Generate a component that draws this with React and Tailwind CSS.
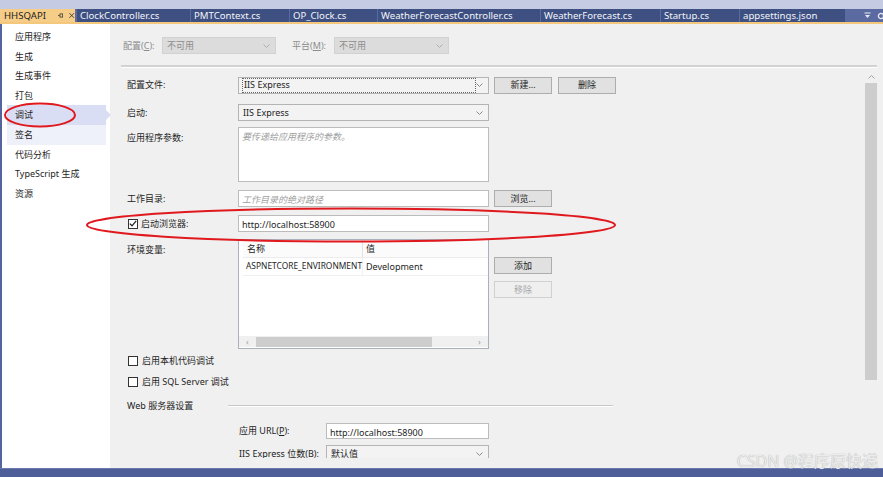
import React from 'react';

const font = "font-['Noto_Sans','Noto_Sans_CJK_SC',sans-serif]";

const tabs = [
  ['ClockController.cs', 'w-[113px]'],
  ['PMTContext.cs', 'w-[98px]'],
  ['OP_Clock.cs', 'w-[87px]'],
  ['WeatherForecastController.cs', 'w-[162px]'],
  ['WeatherForecast.cs', 'w-[119px]'],
  ['Startup.cs', 'w-[78px]'],
  ['appsettings.json', 'w-[105px]'],
];

const menu = ['应用程序', '生成', '生成事件', '打包', '调试', '签名', '代码分析', 'TypeScript 生成', '资源'];

const Chevron = ({ color = '#7a7a7a' }) => (
  <svg width="7" height="4" viewBox="0 0 7 4" fill="none">
    <path d="M0.5 0.5 L3.5 3.5 L6.5 0.5" stroke={color} strokeWidth="1" />
  </svg>
);

const Select = ({ value, className = 'w-[251px]', disabled, dotted }) => (
  <div
    className={`${className} h-[17px] shrink-0 flex items-center justify-between pl-[3px] pr-[5px] border ${
      disabled ? 'bg-[#dcdcdc] border-[#d2d2d2] text-[#8c8c8c]' : 'bg-[#f3f3f3] border-[#b4b4b4] text-[#1e1e1e]'
    }`}
  >
    <div className={`flex-1 h-full flex items-center pl-[1px] ${dotted ? 'border border-dotted border-[#666]' : ''}`}>
      {value}
    </div>
    <Chevron color={disabled ? '#b0b0b0' : '#8a8a8a'} />
  </div>
);

const Input = ({ value, placeholder, className = 'w-[251px] h-[17px]' }) => (
  <div className={`${className} shrink-0 bg-white border border-[#bcbcbc] pl-[3px] flex items-start pt-[2px]`}>
    {value ? (
      <span className="text-[#1e1e1e]">{value}</span>
    ) : (
      <span className="italic text-[#a0a0a0]">{placeholder}</span>
    )}
  </div>
);

const Button = ({ children, disabled }) => (
  <button
    className={`w-[58px] h-[17px] shrink-0 border flex items-center justify-center ${
      disabled ? 'bg-[#efefef] border-[#d0d0d0] text-[#a8a8a8]' : 'bg-[#e1e1e1] border-[#adadad] text-[#1e1e1e]'
    }`}
  >
    {children}
  </button>
);

const Check = ({ checked }) => (
  <div className="w-[10px] h-[10px] shrink-0 border border-[#333] bg-white flex items-center justify-center">
    {checked && (
      <svg width="8" height="7" viewBox="0 0 8 7" fill="none">
        <path d="M0.8 3.6 L3 5.8 L7.2 0.8" stroke="#222" strokeWidth="1.3" />
      </svg>
    )}
  </div>
);

export default function App() {
  return (
    <div className={`${font} relative w-[883px] h-[477px] overflow-hidden bg-[#c6cbe4] flex flex-col text-[9px] text-[#1e1e1e]`}>
      {/* tab strip */}
      <div className="h-[9px] shrink-0" />
      <div className="h-[13px] shrink-0 bg-[#5b6ba1] flex items-stretch gap-[1px] text-[9.6px] leading-none">
        <div className="w-[75px] mr-[1px] bg-[#f5cd86] text-[#1e1e1e] flex items-center pl-[4px]">
          <span>HHSQAPI</span>
          <svg width="7" height="5" viewBox="0 0 7 5" className="ml-[12px]" fill="none">
            <path d="M0 2.5 H2" stroke="#333" strokeWidth="1" />
            <rect x="2.5" y="0.5" width="3.5" height="4" stroke="#333" strokeWidth="1" />
          </svg>
          <svg width="7" height="7" viewBox="0 0 7 7" className="ml-[6px]" fill="none">
            <path d="M0.5 0.5 L6.5 6.5 M6.5 0.5 L0.5 6.5" stroke="#333" strokeWidth="1.1" />
          </svg>
        </div>
        {tabs.map(([name, w]) => (
          <div key={name} className={`${w} bg-[#3e5081] text-[#f2f4fa] flex items-center pl-[3px]`}>
            {name}
          </div>
        ))}
        <div className="flex-1 flex items-center justify-end gap-[6px]">
          <svg width="7" height="7" viewBox="0 0 7 7">
            <path d="M0.5 1 H6.5" stroke="#e8ebf5" strokeWidth="1" />
            <path d="M1 3 L6 3 L3.5 6 Z" fill="#e8ebf5" />
          </svg>
          <svg width="6" height="8" viewBox="0 0 6 8" fill="none">
            <circle cx="4" cy="4" r="2.6" stroke="#e8ebf5" strokeWidth="1.3" />
          </svg>
        </div>
      </div>
      <div className="h-[2px] shrink-0 bg-[#f4c87c]" />

      {/* body */}
      <div className="flex-1 flex border-l-[2px] border-[#53649f] min-h-0">
        {/* sidebar */}
        <div className="w-[108px] shrink-0 bg-white pt-[3px] flex flex-col">
          {menu.map((m) => (
            <div
              key={m}
              className={`relative h-[19.6px] ml-[5px] w-[99px] pl-[8px] flex items-center ${
                m === '调试' ? 'bg-[#dadef4]' : m === '签名' ? 'bg-[#eef0fa]' : ''
              }`}
            >
              {m}
              {m === '调试' && (
                <div className="absolute right-[-5px] top-[5px] w-0 h-0 border-y-[5px] border-y-transparent border-l-[5px] border-l-[#dadef4]" />
              )}
            </div>
          ))}
        </div>

        {/* content */}
        <div className="flex-1 bg-[#f0f0f0] flex flex-col min-w-0">
          <div className="h-[46px] shrink-0 pl-[11px] pt-[13px]">
            <div className="h-[17px] flex items-center pl-[2px] text-[#8c8c8c]">
              <span className="w-[39px]">配置(<u>C</u>):</span>
              <Select value="不可用" className="w-[114px]" disabled />
              <span className="ml-[16px] w-[42px]">平台(<u>M</u>):</span>
              <Select value="不可用" className="w-[115px]" disabled />
            </div>
            <div className="mt-[11px] mr-[6px] h-[2px] bg-[#d2d2d2] border-b border-white box-content" />
          </div>

          <div className="h-[388px] shrink-0 flex overflow-hidden">
            <div className="flex-1 pl-[17px] flex flex-col">
              <div className="mt-[6px] h-[18px] flex items-center shrink-0">
                <span className="w-[111px]">配置文件:</span>
                <Select value="IIS Express" dotted />
                <div className="ml-[5px] flex gap-[6px]">
                  <Button>新建...</Button>
                  <Button>删除</Button>
                </div>
              </div>
              <div className="mt-[10px] h-[17px] flex items-center shrink-0">
                <span className="w-[111px]">启动:</span>
                <Select value="IIS Express" />
              </div>
              <div className="mt-[6px] h-[55px] flex items-start shrink-0">
                <span className="w-[111px] pt-[4px]">应用程序参数:</span>
                <Input placeholder="要传递给应用程序的参数。" className="w-[251px] h-[55px]" />
              </div>
              <div className="mt-[8px] h-[17px] flex items-center shrink-0">
                <span className="w-[111px]">工作目录:</span>
                <Input placeholder="工作目录的绝对路径" />
                <div className="ml-[5px]">
                  <Button>浏览...</Button>
                </div>
              </div>
              <div className="mt-[8px] h-[17px] flex items-center shrink-0">
                <div className="w-[111px] flex items-center pl-[1px] gap-[3px]">
                  <Check checked />
                  <span>启动浏览器:</span>
                </div>
                <Input value="http://localhost:58900" />
              </div>
              <div className="mt-[7px] h-[110px] flex items-start shrink-0">
                <span className="w-[111px] pt-[4px]">环境变量:</span>
                <div className="w-[251px] h-[110px] border border-[#abb0ba] bg-white flex flex-col">
                  <div className="h-[18px] flex ml-[4px] border-b border-[#ececec] bg-[#fbfbfb]">
                    <div className="w-[120px] pl-[4px] border-r border-[#e2e2e2] flex items-center">名称</div>
                    <div className="flex-1 pl-[3px] flex items-center">值</div>
                  </div>
                  <div className="h-[18px] flex ml-[4px] border-b border-[#f0f0f0]">
                    <div className="w-[120px] pl-[3px] border-r border-[#f0f0f0] flex items-center whitespace-nowrap text-[8.4px]">ASPNETCORE_ENVIRONMENT</div>
                    <div className="flex-1 pl-[3px] flex items-center">Development</div>
                  </div>
                  <div className="flex-1" />
                  <div className="h-[11px] bg-[#f0f0f0] flex items-center mb-[1px]">
                    <span className="w-[17px] text-center text-[#a0a0a0] text-[9px] leading-none">‹</span>
                    <div className="w-[176px] h-[10px] bg-[#cdcdcd]" />
                    <div className="flex-1" />
                    <span className="w-[17px] text-center text-[#a0a0a0] text-[9px] leading-none">›</span>
                  </div>
                </div>
                <div className="ml-[5px] mt-[18px] flex flex-col gap-[7px]">
                  <Button>添加</Button>
                  <Button disabled>移除</Button>
                </div>
              </div>
              <div className="mt-[6px] h-[12px] flex items-center gap-[4px] pl-[1px] shrink-0">
                <Check />
                <span>启用本机代码调试</span>
              </div>
              <div className="mt-[9px] h-[12px] flex items-center gap-[4px] pl-[1px] shrink-0">
                <Check />
                <span>启用 SQL Server 调试</span>
              </div>
              <div className="mt-[11px] h-[14px] flex items-center shrink-0">
                <span className="w-[101px]">Web 服务器设置</span>
                <div className="w-[385px] h-[1px] bg-[#c8c8c8] border-b border-white box-content" />
              </div>
              <div className="mt-[10px] h-[16px] flex items-center shrink-0 pl-[112px]">
                <span className="w-[87px]">应用 URL(<u>P</u>):</span>
                <Input value="http://localhost:58900" className="w-[163px] h-[16px]" />
              </div>
              <div className="mt-[6px] h-[17px] flex items-center shrink-0 pl-[112px]">
                <span className="w-[87px] whitespace-nowrap">IIS Express 位数(<u>B</u>):</span>
                <Select value="默认值" className="w-[163px]" />
              </div>
            </div>

            {/* vertical scrollbar */}
            <div className="w-[12px] mr-[6px] flex flex-col items-center">
              <div className="h-[13px] flex items-center justify-center">
                <svg width="7" height="4" viewBox="0 0 7 4" fill="none">
                  <path d="M0.5 3.5 L3.5 0.5 L6.5 3.5" stroke="#a0a0a0" strokeWidth="1" />
                </svg>
              </div>
              <div className="w-[12px] h-[297px] bg-[#cdcdcd]" />
            </div>
          </div>
        </div>
      </div>
      <div className="h-[9px] shrink-0 bg-[#4d5e99] border-t border-[#6a79ae]" />

      {/* annotations */}
      <svg className="absolute inset-0 pointer-events-none" width="883" height="477" fill="none">
        <ellipse cx="40" cy="115" rx="35" ry="11.5" stroke="#e0191e" strokeWidth="2" />
        <ellipse cx="351" cy="225" rx="264" ry="16.5" stroke="#e0191e" strokeWidth="2" />
      </svg>
      <div className="absolute right-[5px] bottom-[8px] text-[16px] leading-none text-[#ececec] [text-shadow:0_0_1px_#9a9a9a]">
        CSDN @程序原快递
      </div>
    </div>
  );
}
